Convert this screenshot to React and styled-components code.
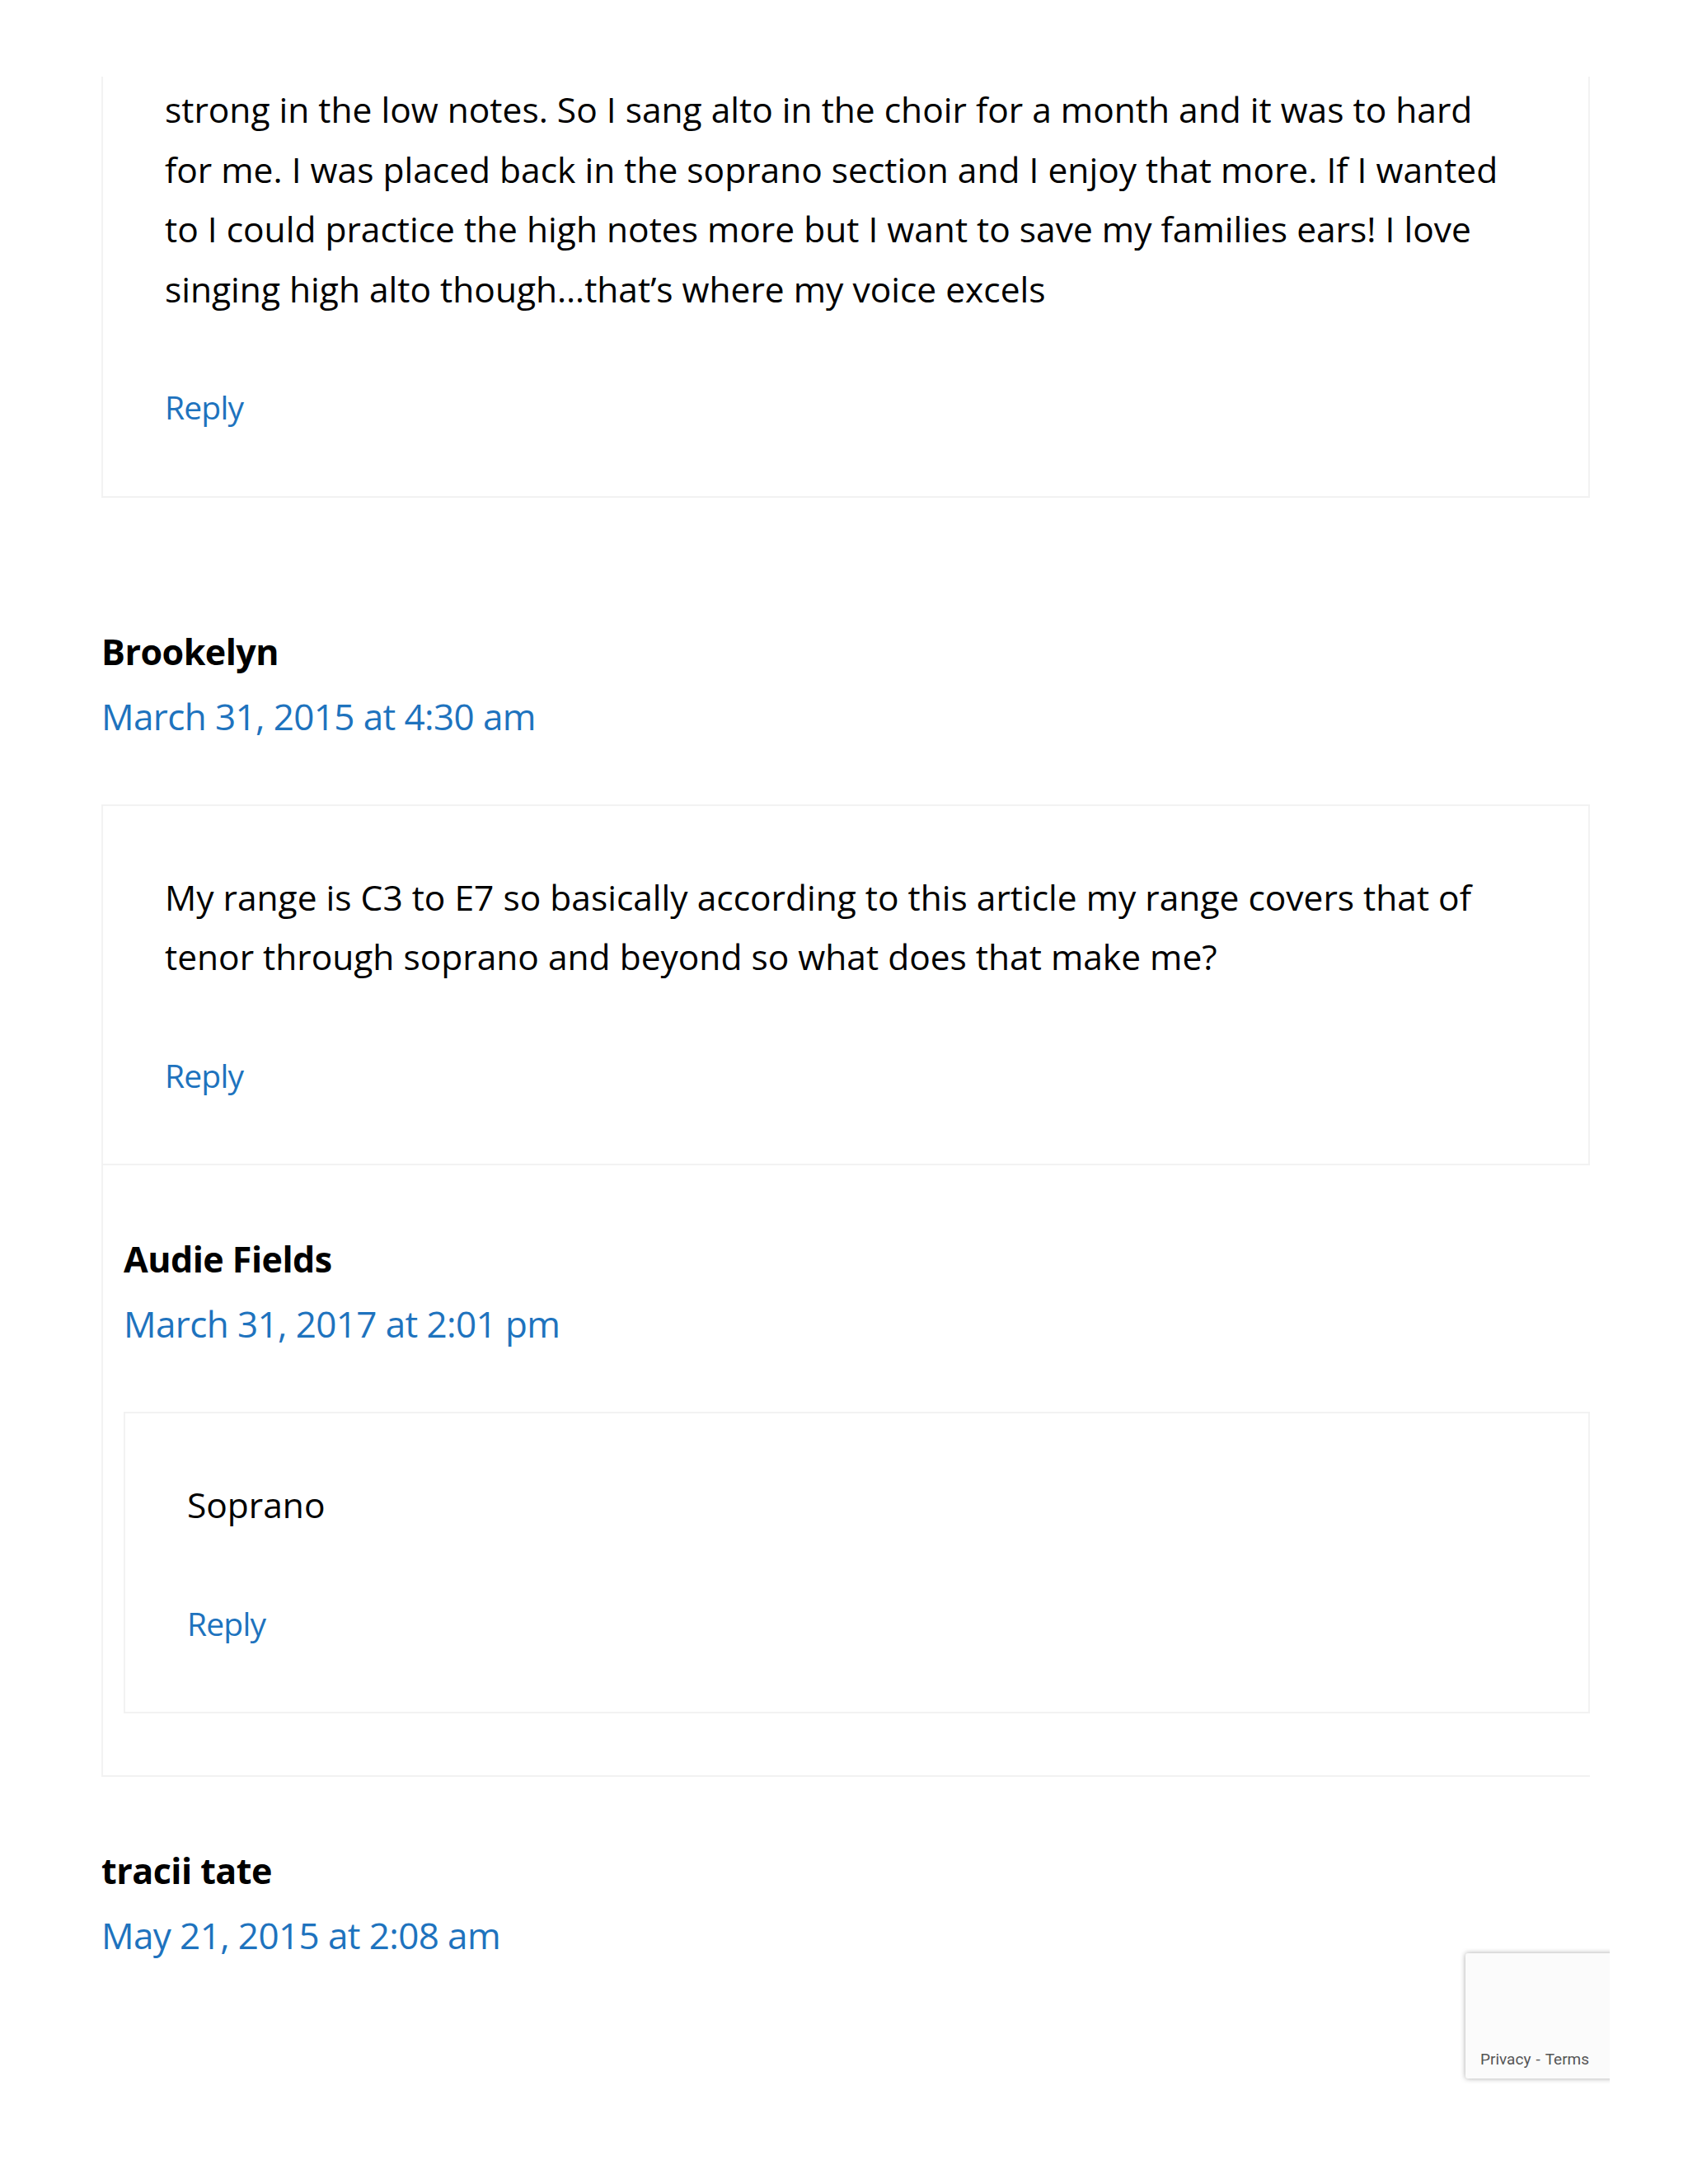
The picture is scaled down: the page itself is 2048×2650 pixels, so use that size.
import React from "react";
import styled, { createGlobalStyle } from "styled-components";

const GlobalStyle = createGlobalStyle`
  html, body {
    margin: 0;
    padding: 0;
    background: #ffffff;
  }
  body {
    font-family: "Open Sans", "Noto Sans", sans-serif;
    color: #000;
  }
  * {
    box-sizing: border-box;
  }
`;

const Page = styled.div`
  position: relative;
  min-height: 2650px;
  padding: 93px 119px 0 123px;
  overflow: hidden;
`;

const CommentList = styled.ol`
  list-style: none;
  margin: 0;
  padding: 0;
`;

const ChildList = styled.ol`
  list-style: none;
  margin: -75px 0 0;
  padding: 0 0 0 25px;
  border-left: 2px solid #f2f2f2;
  border-bottom: 2px solid #f2f2f2;
`;

const CommentItem = styled.li`
  margin: 0;
`;

const CommentBody = styled.article`
  padding: ${(props) => (props.$continued ? "0 0 73px" : "75px 0")};
`;

const Meta = styled.div`
  margin-bottom: 68px;
`;

const AuthorName = styled.div`
  font-size: 43px;
  font-weight: 700;
  line-height: 78px;
  letter-spacing: -0.5px;
`;

const DateLink = styled.a`
  display: block;
  font-size: 44px;
  line-height: 78px;
  color: #1e73be;
  text-decoration: none;
  letter-spacing: -0.6px;
`;

const ContentBox = styled.div`
  border: 2px solid #f2f2f2;
  border-top: ${(props) => (props.$continued ? "none" : "2px solid #f2f2f2")};
  padding: ${(props) => (props.$continued ? "4px" : "75px")} 75px 71px;
`;

const Text = styled.p`
  margin: 0 0 71px;
  font-size: 42.5px;
  line-height: 72.5px;
`;

const ReplyLink = styled.a`
  display: block;
  font-size: 39px;
  line-height: 72.5px;
  color: #1e73be;
  text-decoration: none;
  letter-spacing: -0.8px;
`;

const BadgeClip = styled.div`
  position: absolute;
  left: 1770px;
  top: 2360px;
  width: 183px;
  height: 172px;
  overflow: hidden;
`;

const Badge = styled.div`
  position: absolute;
  left: 8px;
  top: 10px;
  width: 240px;
  height: 152px;
  background: #fbfbfb;
  border-radius: 3px;
  box-shadow: 0 0 6px rgba(0, 0, 0, 0.35);
`;

const BadgeLinks = styled.div`
  position: absolute;
  left: 18px;
  bottom: 12px;
  font-family: Roboto, "Liberation Sans", sans-serif;
  font-size: 19px;
  color: #555;
  display: flex;
  gap: 6px;
`;

const comments = [
  {
    id: 1,
    continued: true,
    text:
      "strong in the low notes. So I sang alto in the choir for a month and it was to hard for me. I was placed back in the soprano section and I enjoy that more. If I wanted to I could practice the high notes more but I want to save my families ears! I love singing high alto though…that’s where my voice excels",
  },
  {
    id: 2,
    author: "Brookelyn",
    date: "March 31, 2015 at 4:30 am",
    text:
      "My range is C3 to E7 so basically according to this article my range covers that of tenor through soprano and beyond so what does that make me?",
    children: [
      {
        id: 3,
        author: "Audie Fields",
        date: "March 31, 2017 at 2:01 pm",
        text: "Soprano",
      },
    ],
  },
  {
    id: 4,
    author: "tracii tate",
    date: "May 21, 2015 at 2:08 am",
  },
];

const Comment = ({ comment }) => (
  <CommentItem>
    <CommentBody $continued={comment.continued}>
      {comment.author && (
        <Meta>
          <AuthorName>{comment.author}</AuthorName>
          <DateLink href="#">{comment.date}</DateLink>
        </Meta>
      )}
      {comment.text && (
        <ContentBox $continued={comment.continued}>
          <Text>{comment.text}</Text>
          <ReplyLink href="#">Reply</ReplyLink>
        </ContentBox>
      )}
    </CommentBody>
    {comment.children && (
      <ChildList>
        {comment.children.map((child) => (
          <Comment key={child.id} comment={child} />
        ))}
      </ChildList>
    )}
  </CommentItem>
);

export default function App() {
  return (
    <>
      <GlobalStyle />
      <Page>
        <CommentList>
          {comments.map((c) => (
            <Comment key={c.id} comment={c} />
          ))}
        </CommentList>
        <BadgeClip>
          <Badge>
            <BadgeLinks>
              <span>Privacy</span>
              <span>-</span>
              <span>Terms</span>
            </BadgeLinks>
          </Badge>
        </BadgeClip>
      </Page>
    </>
  );
}
